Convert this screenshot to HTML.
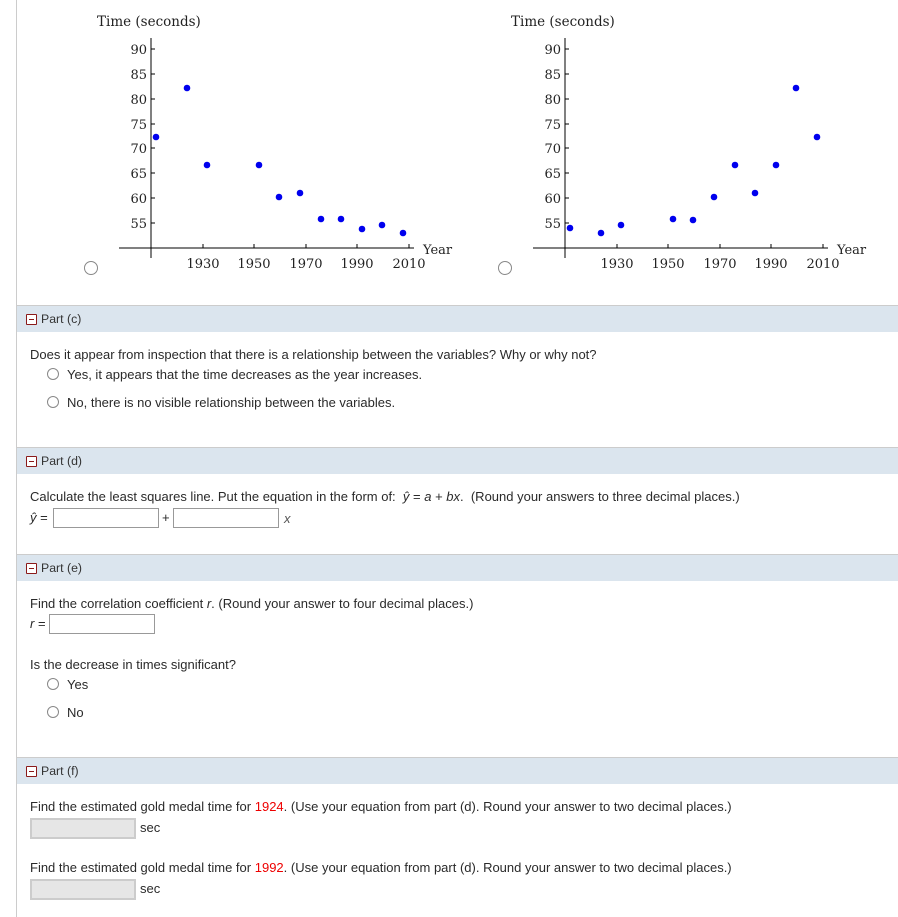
<!DOCTYPE html>
<html><head><meta charset="utf-8"><style>
body{margin:0;width:898px;height:917px;background:#fff;position:relative;overflow:hidden;font-family:"Liberation Sans",Arial,sans-serif;font-size:13px;color:#2a2a2a}
.a{position:absolute;white-space:nowrap}
.vl{position:absolute;left:16px;top:0;width:1px;height:917px;background:#ccc}
.hb{position:absolute;left:17px;width:881px;height:26px;background:#dbe5ee;border-top:1px solid #ccc}
.hb span{position:absolute;left:24px;top:6px;font-size:12.3px;color:#333}
.hb i{position:absolute;left:9px;top:8px;width:9px;height:9px;border:1px solid #8b1a1a;border-radius:1px;background:#fff}
.hb i:after{content:"";position:absolute;left:2px;top:4px;width:5px;height:1px;background:#8b1a1a}
.rd{position:absolute;width:12px;height:12px;border:1px solid #888;border-radius:50%;background:#fff;box-sizing:border-box}
.in{position:absolute;height:20px;border:1px solid #999;box-sizing:border-box;background:#fff}
.gr{position:absolute;width:106px;height:21px;background:#e6e6e6;border:2px solid #ccc;box-sizing:border-box}
.red{color:#e00}
</style></head><body>
<div class="vl"></div>
<svg class="a" style="left:0;top:0" width="898" height="285" font-family="'DejaVu Serif','Liberation Serif',serif" font-size="13" fill="#222">
<g>
<text x="97" y="26" font-size="13.5">Time (seconds)</text>
<line x1="151" y1="38" x2="151" y2="258" stroke="#000"/>
<line x1="119" y1="248" x2="414" y2="248" stroke="#000"/>
<g text-anchor="end">
<text x="147" y="54">90</text><text x="147" y="79">85</text><text x="147" y="104">80</text><text x="147" y="129">75</text><text x="147" y="153">70</text><text x="147" y="178">65</text><text x="147" y="203">60</text><text x="147" y="228">55</text>
</g>
<g stroke="#000"><line x1="151" y1="49" x2="155" y2="49"/><line x1="151" y1="74" x2="155" y2="74"/><line x1="151" y1="99" x2="155" y2="99"/><line x1="151" y1="124" x2="155" y2="124"/><line x1="151" y1="148" x2="155" y2="148"/><line x1="151" y1="173" x2="155" y2="173"/><line x1="151" y1="198" x2="155" y2="198"/><line x1="151" y1="223" x2="155" y2="223"/>
<line x1="203" y1="244" x2="203" y2="248"/><line x1="254" y1="244" x2="254" y2="248"/><line x1="306" y1="244" x2="306" y2="248"/><line x1="357" y1="244" x2="357" y2="248"/><line x1="409" y1="244" x2="409" y2="248"/></g>
<g text-anchor="middle"><text x="203" y="268">1930</text><text x="254" y="268">1950</text><text x="306" y="268">1970</text><text x="357" y="268">1990</text><text x="409" y="268">2010</text></g>
<text x="423" y="254">Year</text>
<g fill="#0000ee"><circle cx="156" cy="137" r="3.3"/><circle cx="187" cy="88" r="3.3"/><circle cx="207" cy="165" r="3.3"/><circle cx="259" cy="165" r="3.3"/><circle cx="279" cy="197" r="3.3"/><circle cx="300" cy="193" r="3.3"/><circle cx="321" cy="219" r="3.3"/><circle cx="341" cy="219" r="3.3"/><circle cx="362" cy="229" r="3.3"/><circle cx="382" cy="225" r="3.3"/><circle cx="403" cy="233" r="3.3"/></g>
</g>
<g transform="translate(414,0)">
<text x="97" y="26" font-size="13.5">Time (seconds)</text>
<line x1="151" y1="38" x2="151" y2="258" stroke="#000"/>
<line x1="119" y1="248" x2="414" y2="248" stroke="#000"/>
<g text-anchor="end">
<text x="147" y="54">90</text><text x="147" y="79">85</text><text x="147" y="104">80</text><text x="147" y="129">75</text><text x="147" y="153">70</text><text x="147" y="178">65</text><text x="147" y="203">60</text><text x="147" y="228">55</text>
</g>
<g stroke="#000"><line x1="151" y1="49" x2="155" y2="49"/><line x1="151" y1="74" x2="155" y2="74"/><line x1="151" y1="99" x2="155" y2="99"/><line x1="151" y1="124" x2="155" y2="124"/><line x1="151" y1="148" x2="155" y2="148"/><line x1="151" y1="173" x2="155" y2="173"/><line x1="151" y1="198" x2="155" y2="198"/><line x1="151" y1="223" x2="155" y2="223"/>
<line x1="203" y1="244" x2="203" y2="248"/><line x1="254" y1="244" x2="254" y2="248"/><line x1="306" y1="244" x2="306" y2="248"/><line x1="357" y1="244" x2="357" y2="248"/><line x1="409" y1="244" x2="409" y2="248"/></g>
<g text-anchor="middle"><text x="203" y="268">1930</text><text x="254" y="268">1950</text><text x="306" y="268">1970</text><text x="357" y="268">1990</text><text x="409" y="268">2010</text></g>
<text x="423" y="254">Year</text>
<g fill="#0000ee"><circle cx="156" cy="228" r="3.3"/><circle cx="187" cy="233" r="3.3"/><circle cx="207" cy="225" r="3.3"/><circle cx="259" cy="219" r="3.3"/><circle cx="279" cy="220" r="3.3"/><circle cx="300" cy="197" r="3.3"/><circle cx="321" cy="165" r="3.3"/><circle cx="341" cy="193" r="3.3"/><circle cx="362" cy="165" r="3.3"/><circle cx="382" cy="88" r="3.3"/><circle cx="403" cy="137" r="3.3"/></g>
</g>
</svg>
<div class="rd" style="left:84px;top:261px;width:14px;height:14px"></div>
<div class="rd" style="left:498px;top:261px;width:14px;height:14px"></div>

<div class="hb" style="top:305px"><i></i><span>Part (c)</span></div>
<div class="a" style="left:30px;top:347px">Does it appear from inspection that there is a relationship between the variables? Why or why not?</div>
<div class="rd" style="left:47px;top:368px"></div><div class="a" style="left:67px;top:367px">Yes, it appears that the time decreases as the year increases.</div>
<div class="rd" style="left:47px;top:396px"></div><div class="a" style="left:67px;top:395px">No, there is no visible relationship between the variables.</div>

<div class="hb" style="top:447px"><i></i><span>Part (d)</span></div>
<div class="a" style="left:30px;top:489px">Calculate the least squares line. Put the equation in the form of: &nbsp;<i>ŷ</i> = <i>a</i> + <i>bx</i>. &nbsp;(Round your answers to three decimal places.)</div>
<div class="a" style="left:30px;top:510px"><i>ŷ</i> =</div>
<div class="in" style="left:53px;top:508px;width:106px"></div>
<div class="a" style="left:162px;top:510px">+</div>
<div class="in" style="left:173px;top:508px;width:106px"></div>
<div class="a" style="left:284px;top:511px;color:#555"><i>x</i></div>

<div class="hb" style="top:554px"><i></i><span>Part (e)</span></div>
<div class="a" style="left:30px;top:596px">Find the correlation coefficient <i>r</i>. (Round your answer to four decimal places.)</div>
<div class="a" style="left:30px;top:616px"><i>r</i> =</div>
<div class="in" style="left:49px;top:614px;width:106px"></div>
<div class="a" style="left:30px;top:657px">Is the decrease in times significant?</div>
<div class="rd" style="left:47px;top:678px"></div><div class="a" style="left:67px;top:677px">Yes</div>
<div class="rd" style="left:47px;top:706px"></div><div class="a" style="left:67px;top:705px">No</div>

<div class="hb" style="top:757px"><i></i><span>Part (f)</span></div>
<div class="a" style="left:30px;top:799px">Find the estimated gold medal time for <span class="red">1924</span>. (Use your equation from part (d). Round your answer to two decimal places.)</div>
<div class="gr" style="left:30px;top:818px"></div><div class="a" style="left:140px;top:820px">sec</div>
<div class="a" style="left:30px;top:860px">Find the estimated gold medal time for <span class="red">1992</span>. (Use your equation from part (d). Round your answer to two decimal places.)</div>
<div class="gr" style="left:30px;top:879px"></div><div class="a" style="left:140px;top:881px">sec</div>
</body></html>
